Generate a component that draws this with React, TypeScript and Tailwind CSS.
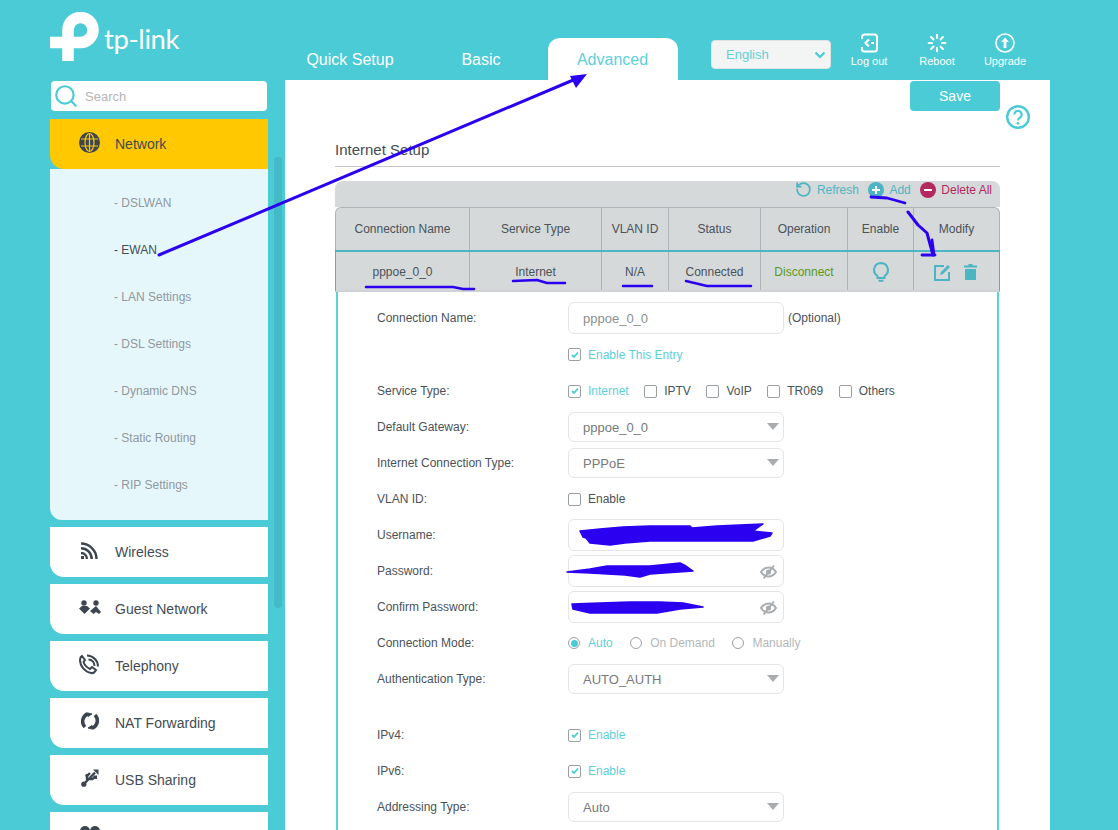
import { Loader, RotateCw, Search } from 'lucide-react';

const Logo = () => (
  <div className="flex items-start">
    <svg width="50" height="50" viewBox="0 0 50 50" className="mt-3 shrink-0">
      <path d="M18 49V18A12.5 12.5 0 1 1 30.5 30.5H0" fill="none" stroke="#fff" strokeWidth="11.5" />
    </svg>
    <span className="mt-[19px] ml-[4px] text-[27.5px] leading-[40px] font-normal tracking-[-0.4px] text-white font-['Lato',sans-serif]">
      tp-link
    </span>
  </div>
);

const HeaderBtn = ({ icon, label }: { icon: React.ReactNode; label: string }) => (
  <div className="flex w-[68px] flex-col items-center pt-[33px] text-[11px] leading-[13px] text-white">
    <div className="flex h-5 w-5 items-center justify-center">{icon}</div>
    <span className="mt-[2px]">{label}</span>
  </div>
);

const subItems = ['- DSLWAN', '- EWAN', '- LAN Settings', '- DSL Settings', '- Dynamic DNS', '- Static Routing', '- RIP Settings'];

const NavItem = ({ icon, label }: { icon: React.ReactNode; label?: string }) => (
  <div className="mt-[7px] flex h-[50px] shrink-0 rounded-bl-[14px] bg-white text-[14px] text-[#434c55]">
    <div className="flex h-[46px] w-[65px] shrink-0 items-center justify-center pl-[14px]">{icon}</div>
    {label && <span className="mt-[16px] leading-[18px]">{label}</span>}
  </div>
);

const columns = ['Connection Name', 'Service Type', 'VLAN ID', 'Status', 'Operation', 'Enable', 'Modify'];
const colClass = 'grid grid-cols-[134px_132px_67px_92px_87px_66px_87px]';
const cellClass = 'flex items-center justify-center border-r border-[#aeb3b5] pt-[2px]';

const Checkbox = ({ checked, label }: { checked?: boolean; label: string }) => (
  <label className={`flex items-center gap-[7px] ${checked ? 'text-[#5ed0da]' : 'text-[#4a5259]'}`}>
    <span className="flex h-[13px] w-[13px] shrink-0 items-center justify-center rounded-[2px] border border-[#9a9fa2]">
      {checked && (
        <svg width="8" height="8" viewBox="0 0 8 8">
          <path d="M1 4l2 2 4-4.500" fill="none" stroke="#4acbd6" strokeWidth="1.800" />
        </svg>
      )}
    </span>
    {label}
  </label>
);

const Radio = ({ checked, label }: { checked?: boolean; label: string }) => (
  <label className={`flex items-center gap-2 ${checked ? 'text-[#5ed0da]' : 'text-[#b4b7b9]'}`}>
    <span className="flex h-3 w-3 shrink-0 items-center justify-center rounded-full border border-[#9a9fa2]">
      {checked && <span className="h-[7px] w-[7px] rounded-full bg-[#4acbd6]" />}
    </span>
    {label}
  </label>
);

const Field = ({ value, eye }: { value?: string; eye?: boolean }) => (
  <div className="flex h-[32px] w-[216px] items-center justify-between rounded-[6px] border border-[#e2e4e5] bg-white pt-px pr-[6px] pl-[14px] text-[13px] text-[#8a8f92]">
    <span>{value}</span>
    {eye && (
      <svg width="17" height="14" viewBox="0 0 17 14">
        <path d="M1 7c2-3 4.500-4.500 7.500-4.500S14 4 16 7c-2 3-4.500 4.500-7.500 4.500S3 10 1 7z" fill="none" stroke="#a9acae" strokeWidth="2" />
        <circle cx="8.500" cy="7" r="2.600" fill="#a9acae" />
        <path d="M14 .5L3.500 13.500" stroke="#a9acae" strokeWidth="1.800" />
      </svg>
    )}
  </div>
);

const SelectBox = ({ value }: { value: string }) => (
  <div className="flex h-[30px] w-[216px] items-center justify-between rounded-[6px] border border-[#e2e4e5] bg-white pt-px pr-[4px] pl-[14px] text-[13px] text-[#77797b]">
    <span>{value}</span>
    <svg width="12" height="7" viewBox="0 0 12 7" className="mb-[3px]">
      <path d="M0 0h12L6 7z" fill="#a9acae" />
    </svg>
  </div>
);

const Row = ({ label, children, tall }: { label?: string; children: React.ReactNode; tall?: boolean }) => (
  <div className={`flex items-center ${tall ? 'h-[37px]' : 'h-9'}`}>
    <div className="w-[191px] shrink-0">{label}</div>
    {children}
  </div>
);

// hand drawn marks that sit on top of the screenshot
const Scribbles = () => (
  <svg width="1118" height="830" viewBox="0 0 1118 830" className="pointer-events-none absolute top-0 left-0">
    <g fill="none" stroke="#2b00f0" strokeLinecap="round" strokeLinejoin="round">
      <path d="M159 255L578 78" strokeWidth="3" />
      <path d="M366 287H453L463 289H474" strokeWidth="2.500" />
      <path d="M513 281L537 280L547 283H565" strokeWidth="2.500" />
      <path d="M623 286H652" strokeWidth="2.500" />
      <path d="M686 281L707 286H751" strokeWidth="2.500" />
      <path d="M871 197L887 198L905 203" strokeWidth="2.800" />
      <path d="M908 212L918 225L927 233L933 255" strokeWidth="3" />
      <path d="M922 255H935M932 240L934 255" strokeWidth="2.800" />
    </g>
    <path d="M587 74L570 76L576 88z" fill="#2b00f0" />
    <g fill="#2b00f0" stroke="#2b00f0" strokeWidth="1.500" strokeLinejoin="round">
      <path d="M580 531L600 529L623 527L650 526L690 526L692 528L717 526L763 524L753 531L772 533L770 536L753 541L683 541L650 541L625 543L610 545L590 543L586 538L583 537z" />
      <path d="M567 572L590 569L607 566L650 566L680 563L686 566L693 571L650 574L640 577L625 575L590 573z" />
      <path d="M572 604L600 603L630 602L660 602L683 603L703 607L680 609L657 613L590 613L573 609z" />
    </g>
  </svg>
);

const App = () => {
  return (
    <div className="relative h-[830px] w-[1118px] overflow-hidden bg-[#4acbd6] font-['Liberation_Sans',sans-serif] text-[12px] text-[#4a5259]">
      <div className="flex h-20 pl-[50px]">
        <div className="w-[235px] shrink-0">
          <Logo />
        </div>
        <div className="flex items-end text-[16px] text-white">
          <div className="flex h-[42px] w-[130px] items-center justify-center pt-[2px]">Quick Setup</div>
          <div className="ml-px flex h-[42px] w-[130px] items-center justify-center pt-[2px]">Basic</div>
          <div className="ml-[2px] flex h-[42px] w-[130px] items-center justify-center rounded-t-[12px] bg-white pt-[2px] pr-px text-[#5ed0da]">Advanced</div>
        </div>
        <div className="mt-10 ml-[33px] flex h-[29px] w-[120px] items-center justify-between rounded-[4px] border border-[#dfe3e4] bg-[#f3f4f4] pr-[4px] pl-[14px] text-[13px] text-[#63cfd9]">
          <span>English</span>
          <svg width="12" height="8" viewBox="0 0 12 8">
            <path d="M1.500 1.500L6 6l4.500-4.500" fill="none" stroke="#4acbd6" strokeWidth="2.200" />
          </svg>
        </div>
        <div className="ml-1 flex">
          <HeaderBtn
            label="Log out"
            icon={
              <svg width="18" height="20" viewBox="0 0 18 20" fill="none" stroke="#fff" strokeWidth="2">
                <path d="M2 6V4a2.500 2.500 0 0 1 2.500-2.500h10A2.500 2.500 0 0 1 17 4v12a2.500 2.500 0 0 1-2.500 2.500h-10A2.500 2.500 0 0 1 2 16v-2" />
                <path d="M9 6.500L5.500 10 9 13.500" strokeWidth="2.200" />
                <path d="M11 10h3" strokeWidth="2" />
              </svg>
            }
          />
          <HeaderBtn label="Reboot" icon={<Loader size={24} color="#fff" strokeWidth={2.500} />} />
          <HeaderBtn
            label="Upgrade"
            icon={
              <svg width="20" height="20" viewBox="0 0 20 20" fill="none" stroke="#fff">
                <circle cx="10" cy="10" r="9" strokeWidth="1.600" />
                <path d="M10 4.500l-4 4.500h2.600v6h2.800V9H14z" fill="#fff" stroke="none" />
              </svg>
            }
          />
        </div>
      </div>

      <div className="flex pl-[50px]">
        <div className="flex h-[750px] w-[218px] shrink-0 flex-col">
          <div className="mx-px mt-px flex h-[30px] shrink-0 items-center rounded-[4px] bg-white pl-[2px] text-[13px] text-[#b5b5b5]">
            <Search size={26} color="#4acbd6" strokeWidth={2} />
            <span className="mt-px ml-[6px]">Search</span>
          </div>
          <div className="mt-2 flex h-[50px] shrink-0 rounded-bl-[14px] bg-[#ffc800] text-[14px] text-[#434c55]">
            <div className="flex h-[46px] w-[65px] shrink-0 items-center justify-center pl-[14px]">
              <svg width="21" height="21" viewBox="0 0 21 21" fill="none" stroke="#ffc800" strokeWidth="1.200">
                <circle cx="10.500" cy="10.500" r="10.500" fill="#3d4650" stroke="none" />
                <ellipse cx="10.500" cy="10.500" rx="4.500" ry="9" />
                <path d="M10.500 1.500v18M2 7h17M2 14h17" />
              </svg>
            </div>
            <span className="mt-4 leading-[18px]">Network</span>
          </div>
          <div className="h-[351px] shrink-0 rounded-bl-[12px] bg-[#e6f7fc] pt-[10px] pl-16">
            {subItems.map((item) => (
              <div key={item} className={`flex h-[47px] items-center ${item === '- EWAN' ? 'text-[#434c55]' : 'text-[#8f989e]'}`}>
                {item}
              </div>
            ))}
          </div>
          <NavItem
            label="Wireless"
            icon={
              <svg width="17" height="17" viewBox="0 0 17 17" fill="none" stroke="#3d4650" strokeWidth="2.400">
                <path d="M0 1.500c8.500 0 15.500 7 15.500 15.500M0 6.300c6 0 10.700 4.700 10.700 10.700M0 11c3.300 0 6 2.700 6 6" />
                <rect x="0" y="14" width="3" height="3" fill="#3d4650" stroke="none" />
              </svg>
            }
          />
          <NavItem
            label="Guest Network"
            icon={
              <svg width="22" height="14" viewBox="0 0 22 14" fill="#3d4650">
                <circle cx="5" cy="3" r="2.700" />
                <circle cx="17" cy="3" r="2.700" />
                <path d="M0 8.500L3 6H8L11 8.500 5.500 14z" />
                <path d="M11 11L17 6L22 12L20 14L17 12L14.500 14z" />
              </svg>
            }
          />
          <NavItem
            label="Telephony"
            icon={
              <svg width="21" height="21" viewBox="0 0 21 21" fill="none" stroke="#3d4650" strokeWidth="2">
                <path d="M3 2l3 4-1.500 2c1 3 3.500 5.500 6.500 7l2-2 4 3c-1 2-3 3.500-5 3C6 18 1 12 1 6c0-2 1-3.500 2-4z" />
                <path d="M8 1.500c6 0 11 5 11 11M9.500 5.500c3.500 0 6 3 6 6.500" />
              </svg>
            }
          />
          <NavItem
            label="NAT Forwarding"
            icon={
              <svg width="18" height="18" viewBox="0 0 18 18" fill="none" stroke="#3d4650" strokeWidth="3.600">
                <path d="M4 15A8 8 0 0 1 7 1.800" />
                <path d="M14 3a8 8 0 0 1-3 13.200" />
                <path d="M7 1l4 1-4 2.500zM11 17l-4-1 4-2.500z" fill="#3d4650" strokeWidth="1" />
              </svg>
            }
          />
          <NavItem
            label="USB Sharing"
            icon={
              <svg width="18" height="18" viewBox="0 0 18 18" fill="none" stroke="#3d4650" strokeWidth="2.400">
                <path d="M2.500 15.500L14 3.500M6 11.500V7l3-3M8 10h3.500l2-2" />
                <circle cx="2.800" cy="15.200" r="2.600" fill="#3d4650" stroke="none" />
                <path d="M12 .5h5.500V6z" fill="#3d4650" stroke="none" />
                <circle cx="6" cy="6.500" r="1.700" fill="#3d4650" stroke="none" />
                <rect x="12.500" y="6.500" width="3.500" height="3.500" fill="#3d4650" stroke="none" />
              </svg>
            }
          />
          <NavItem
            icon={
              <svg width="22" height="18" viewBox="0 0 22 18" fill="#3d4650">
                <circle cx="6" cy="5" r="5" />
                <circle cx="16" cy="5" r="5" />
              </svg>
            }
          />
        </div>

        <div className="mt-[77px] ml-[6px] h-[451px] w-2 shrink-0 rounded-full bg-[#43bac5]" />

        <div className="relative ml-[3px] h-[750px] w-[765px] overflow-hidden bg-white px-[50px] pt-px">
          <div className="flex justify-end">
            <div className="flex h-[30px] w-[90px] items-center justify-center rounded-[4px] bg-[#4acbd6] pt-px text-[14px] text-white">Save</div>
          </div>
          <svg width="24" height="24" viewBox="0 0 24 24" fill="none" className="absolute top-[25px] right-[20px]">
            <circle cx="12" cy="12" r="10.800" stroke="#4acbd6" strokeWidth="2.400" />
            <path d="M8.300 9.500a3.700 3.700 0 1 1 5.700 3.100c-1.300.8-2 1.500-2 2.900" stroke="#4acbd6" strokeWidth="2.200" />
            <circle cx="12" cy="18.300" r="1.400" fill="#4acbd6" />
          </svg>
          <div className="flex h-[56px] items-end border-b border-[#c4c8ca] pb-[7px] text-[15px] leading-[18px] text-[#434c55]">
            Internet Setup
          </div>

          <div className="mt-[14px] flex h-[26px] items-center justify-end gap-[9.500px] rounded-t-[8px] bg-[#d5d9da] pr-2 pb-[9px] text-[#4cb5c3]">
            <span className="flex items-center gap-[5px]">
              <RotateCw size={17} color="#4cb5c3" strokeWidth={2.500} className="-scale-x-100" />
              Refresh
            </span>
            <span className="flex items-center gap-[5px]">
              <svg width="16" height="16" viewBox="0 0 16 16">
                <circle cx="8" cy="8" r="8" fill="#4cb5c3" />
                <path d="M8 4v8M4 8h8" stroke="#fff" strokeWidth="2" />
              </svg>
              Add
            </span>
            <span className="flex items-center gap-[5px] text-[#b3295f]">
              <svg width="16" height="16" viewBox="0 0 16 16">
                <circle cx="8" cy="8" r="8" fill="#b3295f" />
                <path d="M4 8h8" stroke="#fff" strokeWidth="2" />
              </svg>
              Delete All
            </span>
          </div>

          <div className={`${colClass} h-[43px] rounded-t-[6px] border-x border-t border-[#aeb3b5] bg-[#d5d9da]`}>
            {columns.map((c, i) => (
              <div key={c} className={`flex items-center justify-center ${i < 6 ? 'border-r border-[#aeb3b5]' : 'pr-[2px]'}`}>
                {c}
              </div>
            ))}
          </div>
          <div className={`${colClass} h-[42px] border-x border-t-2 border-x-[#4cb5c3] border-t-[#4cb5c3] border-b-2 border-b-[#d0d3d5] bg-[#d5d9da]`}>
            <div className={cellClass}>pppoe_0_0</div>
            <div className={cellClass}>Internet</div>
            <div className={cellClass}>N/A</div>
            <div className={cellClass}>Connected</div>
            <div className={`${cellClass} text-[#5a9a1a]`}>Disconnect</div>
            <div className={cellClass}>
              <svg width="16" height="20" viewBox="0 0 16 20" fill="none" stroke="#4cb5c3" strokeWidth="2">
                <path d="M8 1a7 7 0 0 0-3.500 13v2h7v-2A7 7 0 0 0 8 1z" />
                <path d="M5.500 18.800h5" />
              </svg>
            </div>
            <div className="flex items-center justify-center gap-[13px] pt-[2px] pr-[5px]">
              <svg width="17" height="17" viewBox="0 0 17 17" fill="none" stroke="#4cb5c3" strokeWidth="2">
                <path d="M10 2H1v14h14V8" />
                <path d="M6 11l1-3 7-7 2 2-7 7z" fill="#4cb5c3" stroke="none" />
              </svg>
              <svg width="13" height="16" viewBox="0 0 13 16" fill="#4cb5c3">
                <path d="M4.500 0h4v1.500h4.500V3.500H0V1.500h4.500zM1 5h11v11H1z" />
              </svg>
            </div>
          </div>

          <div className="mx-px h-[560px] border-x-2 border-[#5ed0da] pt-2 pl-[39px]">
            <Row label="Connection Name:">
              <Field value="pppoe_0_0" />
              <span className="ml-1">(Optional)</span>
            </Row>
            <Row tall>
              <Checkbox checked label="Enable This Entry" />
            </Row>
            <Row label="Service Type:">
              <div className="flex gap-[15.5px]">
                <Checkbox checked label="Internet" />
                <Checkbox label="IPTV" />
                <Checkbox label="VoIP" />
                <Checkbox label="TR069" />
                <Checkbox label="Others" />
              </div>
            </Row>
            <Row label="Default Gateway:">
              <SelectBox value="pppoe_0_0" />
            </Row>
            <Row label="Internet Connection Type:">
              <SelectBox value="PPPoE" />
            </Row>
            <Row label="VLAN ID:">
              <Checkbox label="Enable" />
            </Row>
            <Row label="Username:">
              <Field />
            </Row>
            <Row label="Password:">
              <Field eye />
            </Row>
            <Row label="Confirm Password:">
              <Field eye />
            </Row>
            <Row label="Connection Mode:">
              <div className="flex gap-[17.5px]">
                <Radio checked label="Auto" />
                <Radio label="On Demand" />
                <Radio label="Manually" />
              </div>
            </Row>
            <Row label="Authentication Type:">
              <SelectBox value="AUTO_AUTH" />
            </Row>
            <div className="h-5" />
            <Row label="IPv4:">
              <Checkbox checked label="Enable" />
            </Row>
            <Row label="IPv6:">
              <Checkbox checked label="Enable" />
            </Row>
            <Row label="Addressing Type:">
              <SelectBox value="Auto" />
            </Row>
          </div>
        </div>
      </div>
      <Scribbles />
    </div>
  );
};

export default App;
